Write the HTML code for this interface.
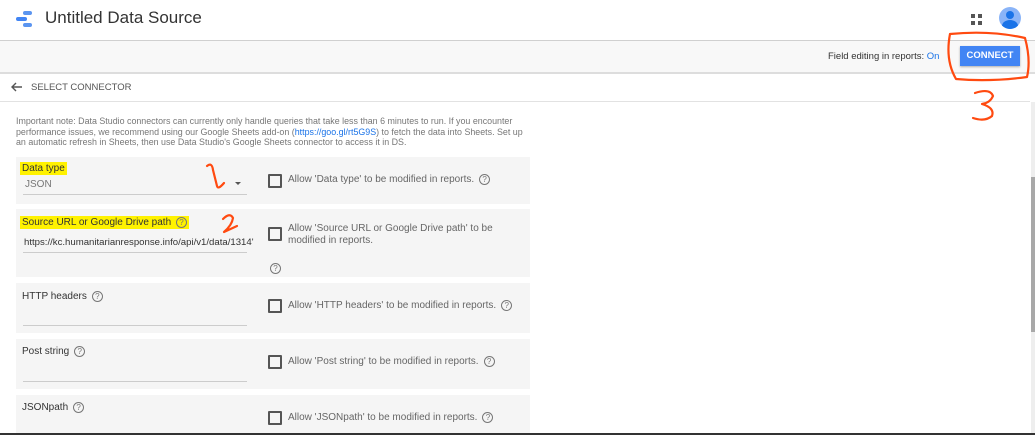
<!DOCTYPE html>
<html><head><meta charset="utf-8"><style>
*{margin:0;padding:0;box-sizing:border-box}
body{width:1035px;height:435px;overflow:hidden;background:#fff;font-family:"Liberation Sans",Arial,sans-serif;position:relative;color:#333}
.abs{position:absolute}
.panel{position:absolute;left:16px;width:514px;background:#f5f5f5}
.lbl{position:absolute;left:6px;font-size:10px;color:#333}
.line{position:absolute;left:7px;width:224px;height:1px;background:#ccc}
.cb{position:absolute;left:252px;width:14px;height:14px;border:2px solid #555;border-radius:1px}
.al{position:absolute;left:272px;font-size:10px;color:#666;line-height:12px}
.q{display:inline-block;width:11px;height:11px;border:1px solid #777;border-radius:50%;font-size:8px;line-height:9px;text-align:center;color:#777;vertical-align:middle;margin-left:5px}
.hl{background:#fff200;padding:1px 2px;margin-left:-2px}
</style></head><body>
<!-- header -->
<div class="abs" style="left:16px;top:10px;width:22px;height:18px">
<div class="abs" style="left:7px;top:1px;width:9px;height:4px;border-radius:2px;background:#5b95f0"></div>
<div class="abs" style="left:0;top:7px;width:11px;height:4px;border-radius:2px;background:#4285f4"></div>
<div class="abs" style="left:7px;top:13px;width:9px;height:4px;border-radius:2px;background:#5b95f0"></div>
</div>
<div class="abs" style="left:45px;top:8px;font-size:17px;color:#333">Untitled Data Source</div>
<div class="abs" style="left:971px;top:14px;width:12px;height:12px">
<div class="abs" style="left:0;top:0;width:4px;height:4px;background:#555"></div><div class="abs" style="left:7px;top:0;width:4px;height:4px;background:#555"></div>
<div class="abs" style="left:0;top:7px;width:4px;height:4px;background:#555"></div><div class="abs" style="left:7px;top:7px;width:4px;height:4px;background:#555"></div>
</div>
<div class="abs" style="left:999px;top:7px;width:22px;height:22px;border-radius:50%;background:#8ab4f8;overflow:hidden">
<div class="abs" style="left:7px;top:4px;width:8px;height:8px;border-radius:50%;background:#1a73e8"></div>
<div class="abs" style="left:3px;top:13px;width:16px;height:12px;border-radius:50%;background:#1a73e8"></div>
</div>
<div class="abs" style="left:0;top:40px;width:1035px;height:1px;background:#d0d0d0"></div>
<!-- toolbar -->
<div class="abs" style="left:0;top:41px;width:1035px;height:31px;background:#f8f8f8"></div>
<div class="abs" style="left:0;top:72px;width:1035px;height:2px;background:#ddd"></div>
<div class="abs" style="left:828px;top:51px;font-size:9.5px;color:#333">Field editing in reports: <span style="color:#1a73e8">On</span></div>
<div class="abs" style="left:960px;top:46px;width:60px;height:20px;background:#4285f4;color:#fff;font-size:9.5px;font-weight:bold;text-align:center;line-height:20px;box-shadow:0 1px 2px rgba(0,0,0,.3)">CONNECT</div>
<!-- select connector -->
<svg class="abs" style="left:11px;top:82px" width="12" height="10" fill="none" stroke="#555" stroke-width="1.4"><path d="M1 5H11M5 1L1 5L5 9"/></svg>
<div class="abs" style="left:31px;top:82px;font-size:9.5px;color:#555">SELECT CONNECTOR</div>
<div class="abs" style="left:0;top:101px;width:1030px;height:1px;background:#e2e2e2"></div>
<!-- scrollbar -->
<div class="abs" style="left:1031px;top:102px;width:4px;height:331px;background:#eee"></div>
<div class="abs" style="left:1031px;top:177px;width:4px;height:155px;background:#a8a8a8"></div>
<div class="abs" style="left:0;top:433px;width:1035px;height:2px;background:#333"></div>
<!-- note -->
<div class="abs" style="left:16px;top:116px;width:515px;font-size:8.9px;line-height:10.5px;color:#777">Important note: Data Studio connectors can currently only handle queries that take less than 6 minutes to run. If you encounter performance issues, we recommend using our Google Sheets add-on (<span style="color:#1a73e8">https://goo.gl/rt5G9S</span>) to fetch the data into Sheets. Set up an automatic refresh in Sheets, then use Data Studio's Google Sheets connector to access it in DS.</div>
<!-- panels -->
<div class="panel" style="top:157px;height:47px">
<div class="lbl" style="top:6px"><span class="hl">Data type</span></div>
<div class="abs" style="left:9px;top:22px;font-size:10px;color:#777">JSON</div>
<div class="abs" style="left:219px;top:25px;width:0;height:0;border-left:3px solid transparent;border-right:3px solid transparent;border-top:3px solid #555"></div>
<div class="line" style="top:37px"></div>
<div class="cb" style="top:17px"></div>
<div class="al" style="top:17px">Allow 'Data type' to be modified in reports.<span class="q">?</span></div>
</div>
<div class="panel" style="top:209px;height:68px">
<div class="lbl" style="top:8px"><span class="hl">Source URL or Google Drive path <span class="q" style="margin-left:2px">?</span></span></div>
<div class="abs" style="left:8px;top:28px;font-size:9.6px;color:#333">https://kc.humanitarianresponse.info/api/v1/data/1314'</div>
<div class="line" style="top:43px"></div>
<div class="cb" style="top:18px"></div>
<div class="al" style="top:14px;width:240px">Allow 'Source URL or Google Drive path' to be modified in reports.</div>
<div class="abs" style="left:254px;top:51px"><span class="q" style="margin:0">?</span></div>
</div>
<div class="panel" style="top:283px;height:50px">
<div class="lbl" style="top:8px">HTTP headers<span class="q">?</span></div>
<div class="line" style="top:42px"></div>
<div class="cb" style="top:16px"></div>
<div class="al" style="top:17px">Allow 'HTTP headers' to be modified in reports.<span class="q">?</span></div>
</div>
<div class="panel" style="top:339px;height:50px">
<div class="lbl" style="top:7px">Post string<span class="q">?</span></div>
<div class="line" style="top:42px"></div>
<div class="cb" style="top:16px"></div>
<div class="al" style="top:17px">Allow 'Post string' to be modified in reports.<span class="q">?</span></div>
</div>
<div class="panel" style="top:395px;height:38px">
<div class="lbl" style="top:7px">JSONpath<span class="q">?</span></div>
<div class="cb" style="top:16px"></div>
<div class="al" style="top:17px">Allow 'JSONpath' to be modified in reports.<span class="q">?</span></div>
</div>
<!-- annotations -->
<svg class="abs" style="left:0;top:0" width="1035" height="435" fill="none" stroke="#ff4a10" stroke-width="2.2" stroke-linecap="round" stroke-linejoin="round">
<path d="M207 166 Q212 162 213 170 L217 186 Q218 190 224 183"/>
<path d="M223 219 Q230 212 233 218 Q232 225 224 232 L237 226"/>
<path d="M950 34 Q990 30 1025 38 Q1031 60 1027 77 Q990 82 956 79 Q945 60 950 34"/>
<path d="M975 93 Q990 88 993 96 Q990 103 982 104 Q995 108 992 116 Q985 122 973 118"/>
</svg>
</body></html>
